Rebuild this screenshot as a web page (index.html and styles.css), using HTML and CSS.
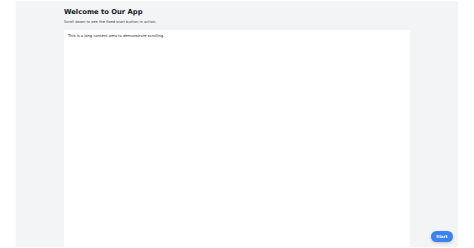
FILE: index.html
```html
<!DOCTYPE html>
<html lang="en">
<head>
    <meta charset="UTF-8">
    <title>Welcome</title>
    <link rel="stylesheet" href="styles.css">
</head>
<body>
    <div class="page">
        <h1 class="title">Welcome to Our App</h1>
        <p class="lead">Scroll down to see the fixed start button in action.</p>
        <div class="content">
            <p>This is a long content area to demonstrate scrolling.</p>
        </div>
    </div>
    <button class="start">Start</button>
</body>
</html>
```

FILE: styles.css
```css
html,body{
    margin:0;
    padding:0;
    background:#fff;
    font-family:"DejaVu Sans", sans-serif;
    overflow:hidden;
}
.page{
    margin:1px 16px 0;
    height:246px;
    padding:0 48px;
    background:#f3f4f6;
    display:flex;
    flex-direction:column;
    box-shadow:0 1px 2px rgba(0,0,0,0.05);
}
.title{
    margin:7px 0 0;
    font-size:6.8px;
    line-height:9px;
    font-weight:bold;
    color:#111827;
}
.lead{
    margin:3px 0 0;
    font-size:3.7px;
    line-height:5px;
    color:#374151;
}
.content{
    flex:1;
    margin-top:5px;
    padding:4px 4px;
    background:#fff;
}
.content p{
    margin:0;
    font-size:3.7px;
    line-height:5px;
    color:#1f2937;
}
.start{
    position:fixed;
    right:21px;
    bottom:6px;
    width:22px;
    height:11px;
    padding:0;
    border:none;
    border-radius:6px;
    background:#3b82f6;
    color:#fff;
    font-family:"DejaVu Sans", sans-serif;
    font-size:4px;
    font-weight:bold;
    box-shadow:0 1px 3px rgba(0,0,0,0.2);
}
```
